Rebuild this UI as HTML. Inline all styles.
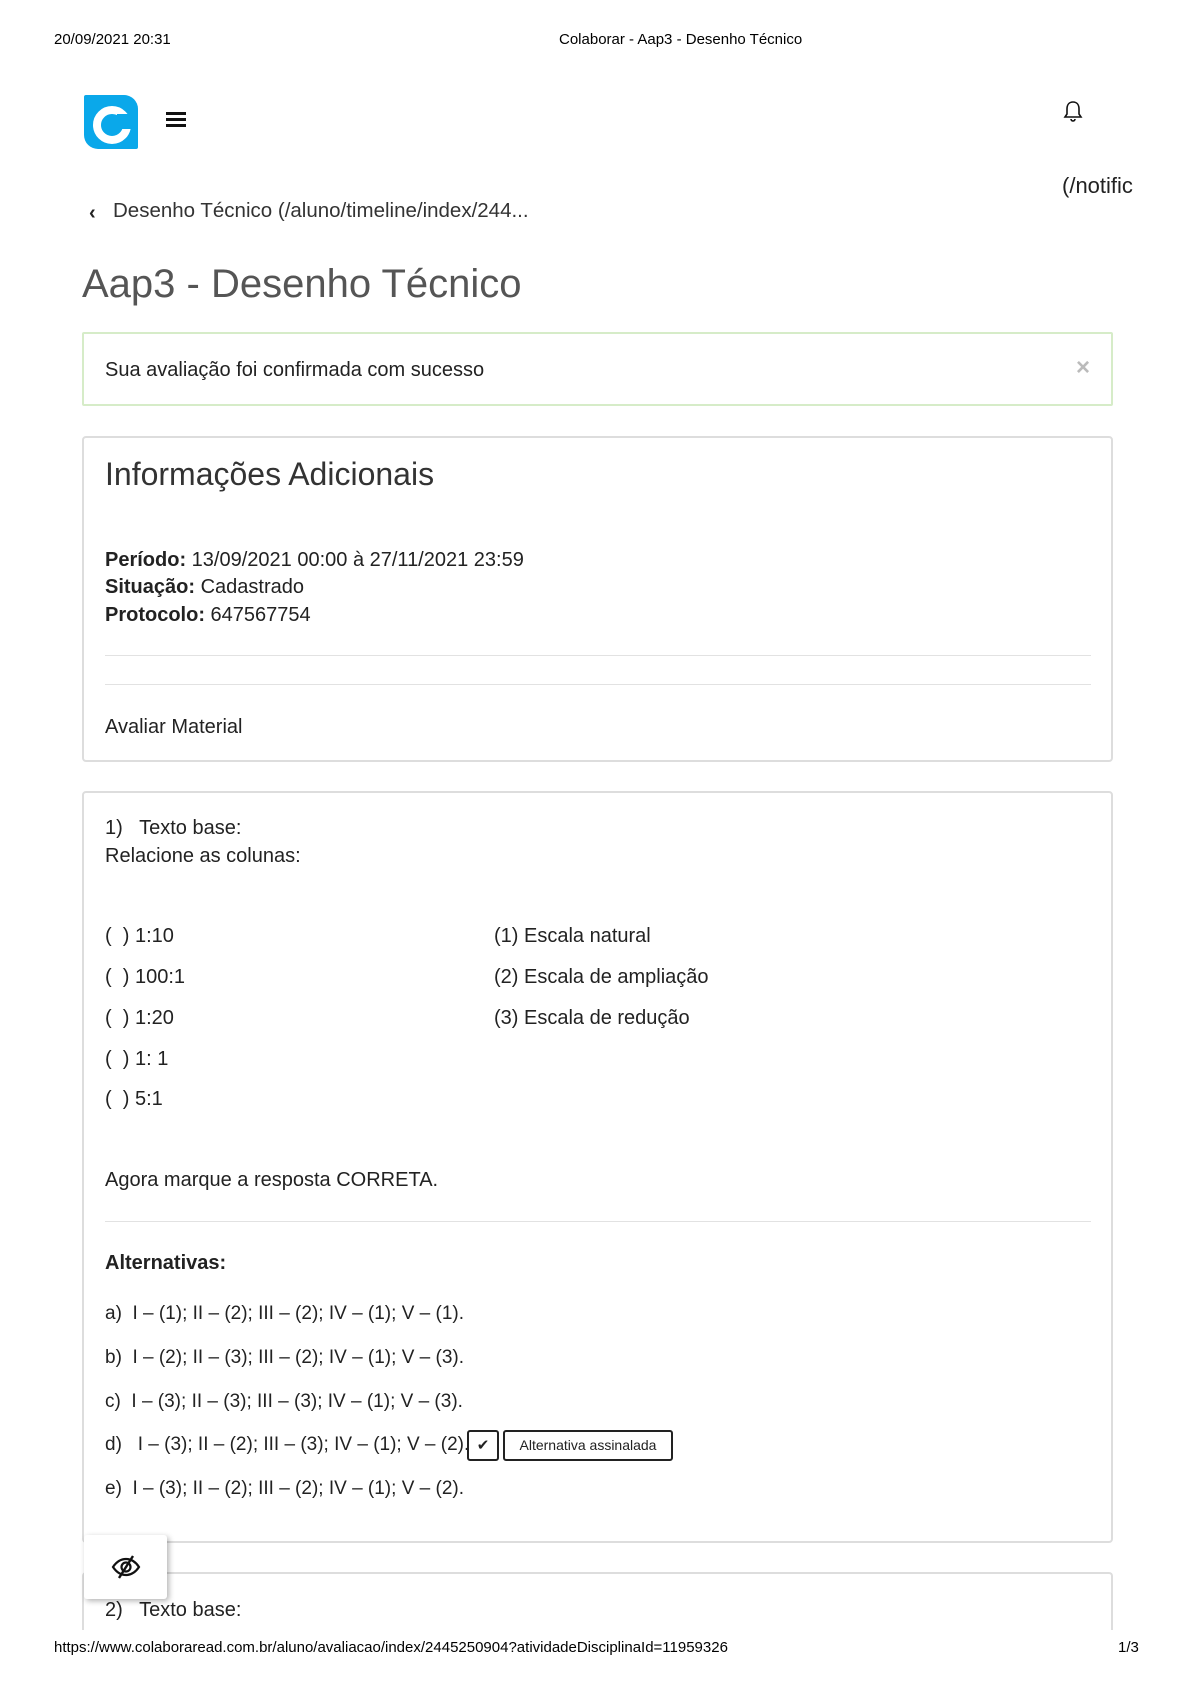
<!DOCTYPE html>
<html><head><meta charset="utf-8"><style>
html,body{margin:0;width:1191px;height:1684px;overflow:hidden}
body{position:relative;background:#fff;font-family:"Liberation Sans",sans-serif;color:#222}
.a{position:absolute;white-space:nowrap}
.t{font-size:20px;color:#222}
.s{font-size:19px;color:#222}
.card{position:absolute;left:82px;width:1027px;border:2px solid #ddd;border-radius:4px;background:#fff}
.hr{position:absolute;left:105px;width:986px;height:1px;background:#e2e2e2}
</style></head><body>
<div class="a" style="left:54px;top:31px;font-size:15px;color:#000">20/09/2021 20:31</div>
<div class="a" style="left:559px;top:31px;font-size:15px;color:#000">Colaborar - Aap3 - Desenho Técnico</div>

<div class="a" style="left:84px;top:95px;width:54px;height:54px;background:#0aa8ea;border-radius:2px 14px 2px 14px"></div>
<div class="a" style="left:93px;top:106px;width:22px;height:22px;border:8px solid #fff;border-radius:50%;"></div>
<div class="a" style="left:117px;top:114px;width:14px;height:15px;background:#0aa8ea"></div>
<div class="a" style="left:166px;top:112px;width:20px;height:3px;background:#111;box-shadow:0 6px 0 #111,0 12px 0 #111"></div>

<svg class="a" style="left:1062px;top:99px" width="22" height="24" viewBox="0 0 22 24"><path d="M11 3c-4 0-6 3-6 7v5l-2 3h16l-2-3v-5c0-4-2-7-6-7z" fill="none" stroke="#111" stroke-width="1.6"/><path d="M9 20a2 2 0 0 0 4 0" fill="none" stroke="#111" stroke-width="1.6"/></svg>
<div class="a" style="left:1062px;top:173px;font-size:22px;color:#222">(/notific</div>

<div class="a" style="left:89px;top:202px;font-size:20px;font-weight:bold">‹</div>
<div class="a" style="left:113px;top:199px;font-size:20.5px;color:#333">Desenho Técnico (/aluno/timeline/index/244...</div>

<div class="a" style="left:82px;top:262px;font-size:40px;color:#555">Aap3 - Desenho Técnico</div>

<div class="a" style="left:82px;top:332px;width:1027px;height:70px;border:2px solid #d6ecc8;border-radius:2px"></div>
<div class="a t" style="left:105px;top:359px">Sua avaliação foi confirmada com sucesso</div>
<div class="a" style="left:1076px;top:354px;font-size:24px;font-weight:bold;color:#bbb">×</div>

<div class="card" style="top:436px;height:322px"></div>
<div class="a" style="left:105px;top:456px;font-size:32px;color:#333">Informações Adicionais</div>
<div class="a t" style="left:105px;top:549px"><b>Período:</b> 13/09/2021 00:00 à 27/11/2021 23:59</div>
<div class="a t" style="left:105px;top:576px"><b>Situação:</b> Cadastrado</div>
<div class="a t" style="left:105px;top:604px"><b>Protocolo:</b> 647567754</div>
<div class="hr" style="top:655px"></div>
<div class="hr" style="top:684px"></div>
<div class="a t" style="left:105px;top:716px">Avaliar Material</div>

<div class="card" style="top:791px;height:748px"></div>
<div class="a t" style="left:105px;top:817px">1)&nbsp;&nbsp; Texto base:</div>
<div class="a t" style="left:105px;top:845px">Relacione as colunas:</div>
<div class="a t" style="left:105px;top:925px">( &nbsp;) 1:10</div>
<div class="a t" style="left:105px;top:966px">( &nbsp;) 100:1</div>
<div class="a t" style="left:105px;top:1007px">( &nbsp;) 1:20</div>
<div class="a t" style="left:105px;top:1048px">( &nbsp;) 1: 1</div>
<div class="a t" style="left:105px;top:1088px">( &nbsp;) 5:1</div>
<div class="a t" style="left:494px;top:925px">(1) Escala natural</div>
<div class="a t" style="left:494px;top:966px">(2) Escala de ampliação</div>
<div class="a t" style="left:494px;top:1007px">(3) Escala de redução</div>
<div class="a t" style="left:105px;top:1169px">Agora marque a resposta CORRETA.</div>
<div class="hr" style="top:1221px"></div>
<div class="a t" style="left:105px;top:1252px;font-weight:bold">Alternativas:</div>
<div class="a s" style="left:105px;top:1303px">a)&nbsp; I – (1); II – (2); III – (2); IV – (1); V – (1).</div>
<div class="a s" style="left:105px;top:1347px">b)&nbsp; I – (2); II – (3); III – (2); IV – (1); V – (3).</div>
<div class="a s" style="left:105px;top:1391px">c)&nbsp; I – (3); II – (3); III – (3); IV – (1); V – (3).</div>
<div class="a s" style="left:105px;top:1434px">d)&nbsp;&nbsp; I – (3); II – (2); III – (3); IV – (1); V – (2).</div>
<div class="a" style="left:467px;top:1430px;width:28px;height:27px;border:2px solid #222;border-radius:3px;text-align:center;font-size:15px;line-height:27px">✔</div>
<div class="a" style="left:503px;top:1430px;width:166px;height:27px;border:2px solid #222;border-radius:3px;text-align:center;font-size:14px;line-height:27px">Alternativa assinalada</div>
<div class="a s" style="left:105px;top:1478px">e)&nbsp; I – (3); II – (2); III – (2); IV – (1); V – (2).</div>

<div class="card" style="top:1572px;height:80px;border-bottom:none"></div>
<div class="a t" style="left:105px;top:1599px">2)&nbsp;&nbsp; Texto base:</div>
<div class="a" style="left:84px;top:1535px;width:83px;height:64px;background:#fff;border-radius:3px;box-shadow:2px 2px 6px rgba(0,0,0,.3)"></div>
<svg class="a" style="left:111px;top:1554px" width="30" height="26" viewBox="0 0 30 26"><path d="M2 13c4-6 8-8 13-8s9 2 13 8c-4 6-8 8-13 8S6 19 2 13z" fill="none" stroke="#111" stroke-width="2.2"/><circle cx="15" cy="13" r="4.5" fill="none" stroke="#111" stroke-width="2.2"/><path d="M22 2L8 24" stroke="#111" stroke-width="2.4"/></svg>

<div class="a" style="left:0;top:1630px;width:1191px;height:60px;background:#fff"></div>
<div class="a" style="left:54px;top:1639px;font-size:15px;color:#000">https://www.colaboraread.com.br/aluno/avaliacao/index/2445250904?atividadeDisciplinaId=11959326</div>
<div class="a" style="left:1118px;top:1639px;font-size:15px;color:#000">1/3</div>
</body></html>
